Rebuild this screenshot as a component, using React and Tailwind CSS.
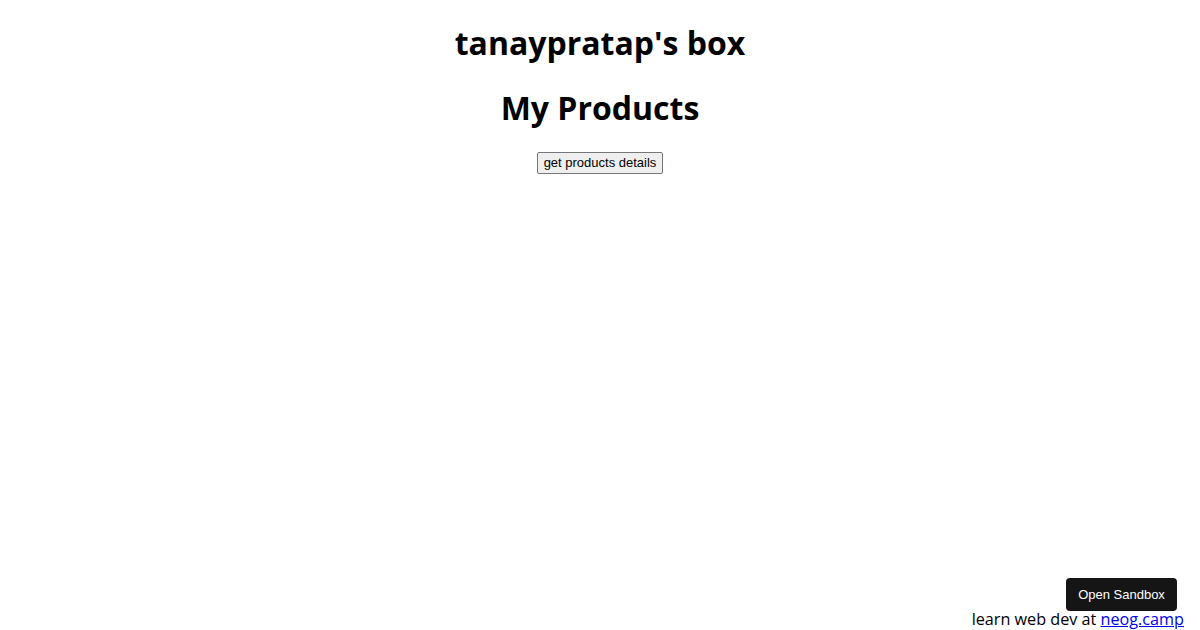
export default function App() {
  return (
    <div className="relative flex h-[630px] flex-col overflow-hidden bg-white text-black" style={{ fontFamily: '"Open Sans", sans-serif' }}>
      <div className="flex flex-col items-center">
        <h1 className="mt-[21.44px] text-[32px] font-bold leading-[43.6px]">tanaypratap's box</h1>
        <h1 className="mt-[21.44px] text-[32px] font-bold leading-[43.6px]">My Products</h1>
        <button
          className="mt-[21.44px] h-[22px] rounded-[2px] border border-[#767676] bg-[#efefef] px-[6px] text-[13px] leading-none text-black"
          style={{ fontFamily: '"Liberation Sans", Arial, sans-serif' }}
        >
          get products details
        </button>
      </div>
      <div className="mt-auto flex justify-end pr-[16px]">
        <p className="text-[16.2px] leading-[22px]">
          learn web dev at{" "}
          <a href="#" className="text-[#0000ee] underline">neog.camp</a>
        </p>
      </div>
      <div
        className="absolute top-[578px] left-[1066px] flex h-[33px] w-[111px] items-center justify-center rounded-[4px] bg-[#151515] text-[13px] text-white"
        style={{ fontFamily: '"Liberation Sans", Arial, sans-serif' }}
      >
        Open Sandbox
      </div>
    </div>
  );
}
